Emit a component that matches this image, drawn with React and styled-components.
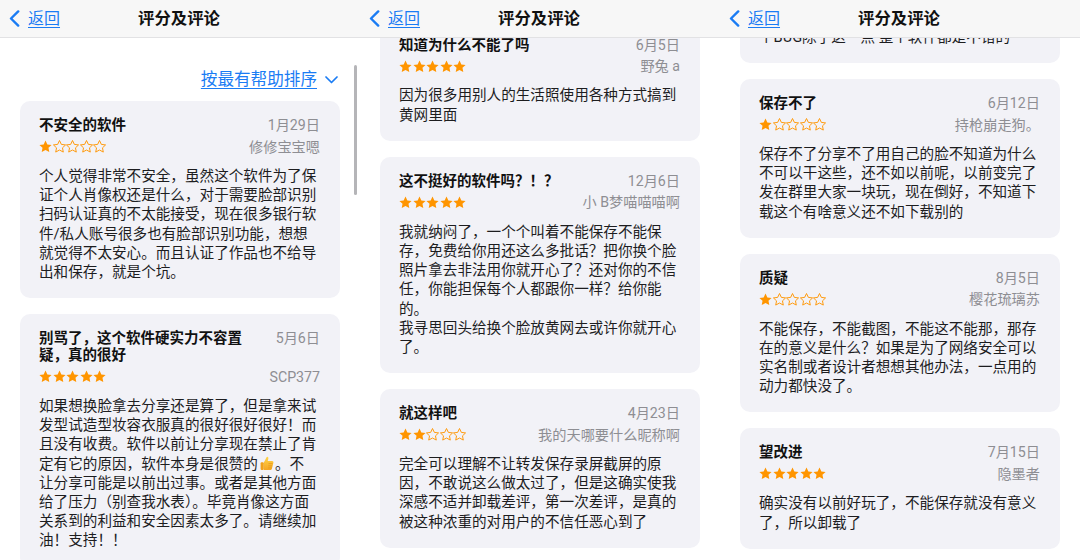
import React from "react";
import styled, { createGlobalStyle } from "styled-components";

const Global = createGlobalStyle`
  html, body { margin: 0; padding: 0; background: #fff; }
  body { font-family: Roboto, "Noto Sans CJK SC", sans-serif; -webkit-font-smoothing: antialiased; }
  * { box-sizing: border-box; }
`;

const Screen = styled.div`
  display: flex;
  width: 1080px;
  height: 560px;
  overflow: hidden;
  background: #fff;
`;

const Panel = styled.section`
  position: relative;
  display: flex;
  flex-direction: column;
  width: 360px;
  height: 560px;
  overflow: hidden;
  background: #fff;
`;

const Nav = styled.header`
  flex-shrink: 0;
  height: 38px;
  display: grid;
  grid-template-columns: 1fr auto 1fr;
  align-items: center;
  background: #f7f7f7;
  border-bottom: 1px solid #e2e2e4;
  position: relative;
  z-index: 2;
`;

const Back = styled.a`
  display: flex;
  align-items: center;
  gap: 8px;
  padding-left: 9px;
  color: #1a7cf4;
  font-size: 16px;
  line-height: 20px;
  text-decoration: underline;
  text-underline-offset: 3px;
  text-decoration-thickness: 1px;
`;

const NavTitle = styled.h1`
  margin: 0;
  font-size: 16.4px;
  line-height: 20px;
  font-weight: 600;
  color: #111;
  margin-left: -2px;
`;

const Scroll = styled.div`
  flex: 1;
  overflow: hidden;
`;

const Feed = styled.div`
  display: flex;
  flex-direction: column;
  gap: 16px;
  padding: 0 20px;
  margin-top: ${(p) => p.$offset || 0}px;
`;

const SortRow = styled.div`
  height: 47px;
  display: flex;
  justify-content: flex-end;
  align-items: flex-start;
  gap: 8px;
  padding: 32px 2px 0 0;
`;

const SortLink = styled.a`
  color: #1a7cf4;
  font-size: 16.6px;
  line-height: 20px;
  text-decoration: underline;
  text-underline-offset: 3px;
  text-decoration-thickness: 1px;
`;

const Card = styled.article`
  background: #f2f2f7;
  border-radius: 10px;
  padding: 16px 20px 16px 19px;
`;

const Head = styled.div`
  display: flex;
  justify-content: space-between;
  align-items: flex-start;
  gap: 12px;
`;

const Title = styled.h2`
  margin: 0;
  font-size: 14.5px;
  line-height: 17px;
  font-weight: 600;
  color: #111;
  white-space: nowrap;
`;

const Meta = styled.span`
  font-size: 14.2px;
  line-height: ${(p) => (p.$tight ? "14px" : "17px")};
  color: #8e8e93;
  white-space: nowrap;
`;

const SubHead = styled.div`
  margin-top: 5.5px;
  height: 14px;
  display: flex;
  justify-content: space-between;
  align-items: center;
`;

const StarRow = styled.div`
  display: flex;
  gap: 0.5px;
`;

const Body = styled.p`
  margin: 13.4px 0 0;
  font-size: 14.6px;
  line-height: 19.2px;
  color: #1d1d1f;
  white-space: nowrap;
  &:first-child { margin-top: 0; }
`;

const Line = styled.span`
  display: block;
`;

const Scrollbar = styled.div`
  position: absolute;
  left: 354px;
  top: 65px;
  width: 3px;
  height: 130px;
  border-radius: 2px;
  background: #b5b5b8;
  z-index: 3;
`;

const Emoji = styled.svg`
  width: 16px;
  height: 16px;
  vertical-align: -2px;
  margin: 0 0 0 1px;
`;

const STAR = "M12 2.2l2.95 6.2 6.75.85-4.95 4.7 1.3 6.75L12 17.4l-6.05 3.3 1.3-6.75-4.95-4.7 6.75-.85z";

function Stars({ n }) {
  return (
    <StarRow>
      {[0, 1, 2, 3, 4].map((i) => (
        <svg key={i} width="13" height="13" viewBox="1.6 1.4 20.8 20.8">
          {i < n ? (
            <path d={STAR} fill="#ff9500" />
          ) : (
            <path d={STAR} fill="none" stroke="#ff9500" strokeWidth="1.5" strokeLinejoin="round" />
          )}
        </svg>
      ))}
    </StarRow>
  );
}

function ThumbsUp() {
  return (
    <Emoji viewBox="0 0 16 16" aria-label="👍">
      <defs>
        <linearGradient id="tu" x1="0" y1="0" x2="0" y2="1">
          <stop offset="0" stopColor="#ffd54a" />
          <stop offset="1" stopColor="#f5a623" />
        </linearGradient>
      </defs>
      <path
        d="M5 7.2 L7.4 2.4 C7.8 1.5 9.1 1.6 9.3 2.6 C9.5 3.5 9.1 4.9 8.7 6 H13.1 C14.1 6 14.7 6.9 14.4 7.8 L12.9 13.7 C12.7 14.5 12 15 11.2 15 H5 Z"
        fill="url(#tu)"
      />
      <rect x="1.6" y="7.2" width="3.2" height="7.8" rx="1" fill="#f0a21c" />
      <path d="M9.5 8.6 H13.6 M9.3 10.8 H13.1 M9.2 12.9 H12.6" stroke="#e08e10" strokeWidth="0.6" fill="none" />
    </Emoji>
  );
}

function Review({ title, date, stars, author, body }) {
  const titleLines = Array.isArray(title) ? title : [title];
  return (
    <Card>
      {title && (
        <>
          <Head>
            <Title>
              {titleLines.map((t, i) => (
                <Line key={i}>{t}</Line>
              ))}
            </Title>
            <Meta>{date}</Meta>
          </Head>
          <SubHead>
            <Stars n={stars} />
            <Meta $tight>{author}</Meta>
          </SubHead>
        </>
      )}
      <Body>
        {body.map((l, i) => (
          <Line key={i}>{l}</Line>
        ))}
      </Body>
    </Card>
  );
}

function NavBar() {
  return (
    <Nav>
      <Back>
        <svg width="11" height="17" viewBox="0 0 11 17">
          <path d="M9.2 1.4 L2 8.5 L9.2 15.6" fill="none" stroke="#1a7cf4" strokeWidth="2.4" strokeLinecap="round" strokeLinejoin="round" />
        </svg>
        返回
      </Back>
      <NavTitle>评分及评论</NavTitle>
      <span />
    </Nav>
  );
}

const panel1 = [
  {
    title: "不安全的软件",
    date: "1月29日",
    stars: 1,
    author: "修修宝宝嗯",
    body: [
      "个人觉得非常不安全，虽然这个软件为了保",
      "证个人肖像权还是什么，对于需要脸部识别",
      "扫码认证真的不太能接受，现在很多银行软",
      "件/私人账号很多也有脸部识别功能，想想",
      "就觉得不太安心。而且认证了作品也不给导",
      "出和保存，就是个坑。",
    ],
  },
  {
    title: ["别骂了，这个软件硬实力不容置", "疑，真的很好"],
    date: "5月6日",
    stars: 5,
    author: "SCP377",
    body: [
      "如果想换脸拿去分享还是算了，但是拿来试",
      "发型试造型妆容衣服真的很好很好很好！而",
      "且没有收费。软件以前让分享现在禁止了肯",
      <>定有它的原因，软件本身是很赞的<ThumbsUp />。不</>,
      "让分享可能是以前出过事。或者是其他方面",
      "给了压力（别查我水表）。毕竟肖像这方面",
      "关系到的利益和安全因素太多了。请继续加",
      "油！支持！！",
    ],
  },
];

const panel2 = [
  {
    title: "知道为什么不能了吗",
    date: "6月5日",
    stars: 5,
    author: "野兔 a",
    body: ["因为很多用别人的生活照使用各种方式搞到", "黄网里面"],
  },
  {
    title: "这不挺好的软件吗？！？",
    date: "12月6日",
    stars: 5,
    author: "小 B梦喵喵喵啊",
    body: [
      "我就纳闷了，一个个叫着不能保存不能保",
      "存，免费给你用还这么多批话？把你换个脸",
      "照片拿去非法用你就开心了？还对你的不信",
      "任，你能担保每个人都跟你一样？给你能",
      "的。",
      "我寻思回头给换个脸放黄网去或许你就开心",
      "了。",
    ],
  },
  {
    title: "就这样吧",
    date: "4月23日",
    stars: 2,
    author: "我的天哪要什么昵称啊",
    body: [
      "完全可以理解不让转发保存录屏截屏的原",
      "因，不敢说这么做太过了，但是这确实使我",
      "深感不适并卸载差评，第一次差评，是真的",
      "被这种浓重的对用户的不信任恶心到了",
    ],
  },
];

const panel3 = [
  {
    body: ["个BUG除了这一点 整个软件都是不错的"],
  },
  {
    title: "保存不了",
    date: "6月12日",
    stars: 1,
    author: "持枪崩走狗。",
    body: [
      "保存不了分享不了用自己的脸不知道为什么",
      "不可以干这些，还不如以前呢，以前变完了",
      "发在群里大家一块玩，现在倒好，不知道下",
      "载这个有啥意义还不如下载别的",
    ],
  },
  {
    title: "质疑",
    date: "8月5日",
    stars: 1,
    author: "樱花琉璃苏",
    body: [
      "不能保存，不能截图，不能这不能那，那存",
      "在的意义是什么？如果是为了网络安全可以",
      "实名制或者设计者想想其他办法，一点用的",
      "动力都快没了。",
    ],
  },
  {
    title: "望改进",
    date: "7月15日",
    stars: 5,
    author: "隐墨者",
    body: ["确实没有以前好玩了，不能保存就没有意义", "了，所以卸载了"],
  },
];

export default function App() {
  return (
    <>
      <Global />
      <Screen>
        <Panel>
          <NavBar />
          <Scroll>
            <Feed>
              <SortRow>
                <SortLink>按最有帮助排序</SortLink>
                <svg width="13" height="20" viewBox="0 0 13 20">
                  <path d="M1 7 L6.5 12.5 L12 7" fill="none" stroke="#1a7cf4" strokeWidth="1.7" strokeLinecap="round" strokeLinejoin="round" />
                </svg>
              </SortRow>
              {panel1.map((r, i) => (
                <Review key={i} {...r} />
              ))}
            </Feed>
          </Scroll>
          <Scrollbar />
        </Panel>
        <Panel>
          <NavBar />
          <Scroll>
            <Feed $offset={-17.5}>
              {panel2.map((r, i) => (
                <Review key={i} {...r} />
              ))}
            </Feed>
          </Scroll>
        </Panel>
        <Panel>
          <NavBar />
          <Scroll>
            <Feed $offset={-26.2}>
              {panel3.map((r, i) => (
                <Review key={i} {...r} />
              ))}
            </Feed>
          </Scroll>
        </Panel>
      </Screen>
    </>
  );
}
